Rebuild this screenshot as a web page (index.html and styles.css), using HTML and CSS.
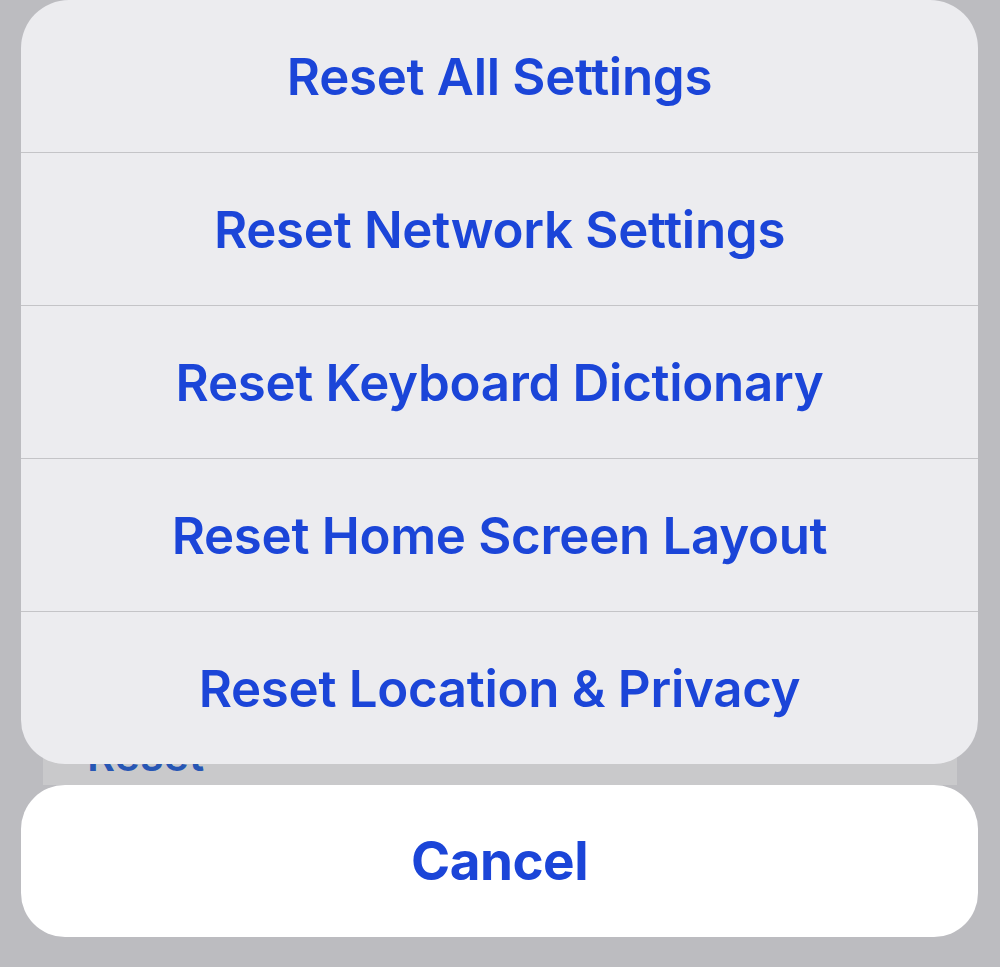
FILE: index.html
```html
<!DOCTYPE html>
<html lang="en">
<head>
  <meta charset="UTF-8">
  <meta name="viewport" content="width=device-width, initial-scale=1.0">
  <title>Reset</title>
  <link rel="stylesheet" href="styles.css">
</head>
<body>
  <div class="screen">
    <div class="sheet">
      <div class="action">Reset All Settings</div>
      <div class="action">Reset Network Settings</div>
      <div class="action">Reset Keyboard Dictionary</div>
      <div class="action">Reset Home Screen Layout</div>
      <div class="action">Reset Location &amp; Privacy</div>
    </div>
    <div class="behind">
      <span class="behind-label">Reset</span>
    </div>
    <div class="cancel">Cancel</div>
  </div>
</body>
</html>
```

FILE: styles.css
```css
* { box-sizing: border-box; margin: 0; padding: 0; }
body {
  font-family: 'Inter', 'Noto Sans', sans-serif;
  background-color: #bcbcc0;
  color: #1b45d8;
  min-height: 100vh;
}
.screen {
  padding: 0 22px 30px 21px;
}
.sheet {
  position: relative;
  z-index: 2;
  background: #ececef;
  border-radius: 0 0 44px 44px;
  border-top-left-radius: 48px;
  border-top-right-radius: 48px;
  overflow: hidden;
}
.action {
  height: 152px;
  display: flex;
  align-items: center;
  justify-content: center;
  font-size: 51px;
  font-weight: 600;
  letter-spacing: -0.3px;
}
.action + .action {
  height: 153px;
  border-top: 1px solid #c4c4c7;
}
.behind {
  position: relative;
  z-index: 1;
  margin: -41px 21px 0 22px;
  height: 62px;
  background: #c9c9cb;
  padding-left: 44px;
}
.behind-label {
  display: block;
  padding-top: 11px;
  font-size: 43px;
  font-weight: 600;
  color: #2756b4;
  line-height: 1;
}
.cancel {
  height: 152px;
  background: #ffffff;
  border-radius: 44px;
  display: flex;
  align-items: center;
  justify-content: center;
  font-size: 53px;
  font-weight: 700;
  letter-spacing: -0.5px;
}
```
